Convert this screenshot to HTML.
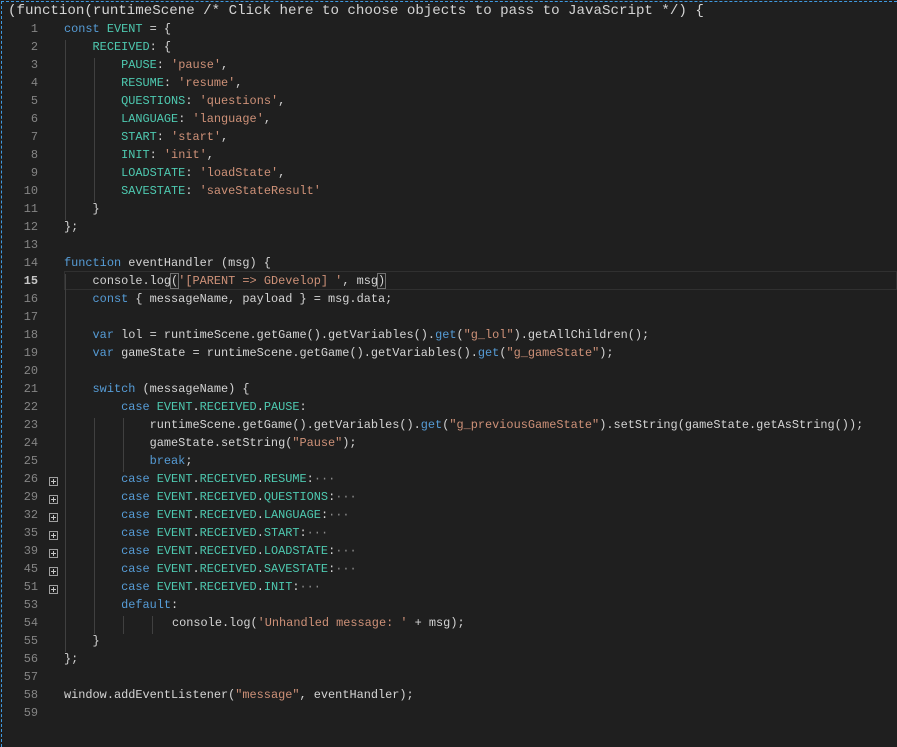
<!DOCTYPE html>
<html><head><meta charset="utf-8"><style>
html,body{margin:0;padding:0;background:#1f1f1f;}
body{width:897px;height:747px;position:relative;overflow:hidden;}
.frame{position:absolute;left:1px;top:1px;right:0;bottom:0;border-left:1px dashed #3f9ae0;border-top:1px dashed #3f9ae0;}
.hdr{position:absolute;left:8px;top:2px;font:14.15px "Liberation Mono",monospace;color:#d4d4d4;line-height:18px;white-space:pre;}
.row{position:absolute;left:0;height:18px;width:897px;line-height:18px;font:11.9px "Liberation Mono",monospace;white-space:pre;}
.ln{position:absolute;left:0;width:38px;text-align:right;color:#858585;}
.ln.a{color:#c6c6c6;font-weight:bold;}
.c{position:absolute;left:64px;color:#d4d4d4;}
.k{color:#569cd6}.t{color:#4ec9b0}.s{color:#ce9178}
.g{position:absolute;width:1px;background:#404040;}
.fold{position:absolute;left:49px;width:7px;height:7px;border:1px solid #a0a0a0;top:5px;}
.fold:before{content:"";position:absolute;left:1px;top:3px;width:5px;height:1px;background:#c5c5c5;}
.fold:after{content:"";position:absolute;left:3px;top:1px;width:1px;height:5px;background:#c5c5c5;}
.cur{position:absolute;left:64px;right:0;top:271px;height:17px;border:1px solid #303030;}
.br{outline:1px solid #707070;}
.dots{color:#8a8a8a}
</style></head><body>
<div class="frame"></div>
<div class="hdr">(function(runtimeScene /* Click here to choose objects to pass to JavaScript */) {</div>
<div class="cur"></div>
<div class="g" style="left:65px;top:40px;height:180px"></div>
<div class="g" style="left:94px;top:58px;height:144px"></div>
<div class="g" style="left:65px;top:274px;height:378px"></div>
<div class="g" style="left:94px;top:418px;height:216px"></div>
<div class="g" style="left:123px;top:418px;height:54px"></div>
<div class="g" style="left:123px;top:616px;height:18px"></div>
<div class="g" style="left:152px;top:616px;height:18px"></div>

<div class="row" style="top:22px"><span class="ln">1</span><span class="c"><span class="k">const</span> <span class="t">EVENT</span> = {</span></div>
<div class="row" style="top:40px"><span class="ln">2</span><span class="c">    <span class="t">RECEIVED</span>: {</span></div>
<div class="row" style="top:58px"><span class="ln">3</span><span class="c">        <span class="t">PAUSE</span>: <span class="s">'pause'</span>,</span></div>
<div class="row" style="top:76px"><span class="ln">4</span><span class="c">        <span class="t">RESUME</span>: <span class="s">'resume'</span>,</span></div>
<div class="row" style="top:94px"><span class="ln">5</span><span class="c">        <span class="t">QUESTIONS</span>: <span class="s">'questions'</span>,</span></div>
<div class="row" style="top:112px"><span class="ln">6</span><span class="c">        <span class="t">LANGUAGE</span>: <span class="s">'language'</span>,</span></div>
<div class="row" style="top:130px"><span class="ln">7</span><span class="c">        <span class="t">START</span>: <span class="s">'start'</span>,</span></div>
<div class="row" style="top:148px"><span class="ln">8</span><span class="c">        <span class="t">INIT</span>: <span class="s">'init'</span>,</span></div>
<div class="row" style="top:166px"><span class="ln">9</span><span class="c">        <span class="t">LOADSTATE</span>: <span class="s">'loadState'</span>,</span></div>
<div class="row" style="top:184px"><span class="ln">10</span><span class="c">        <span class="t">SAVESTATE</span>: <span class="s">'saveStateResult'</span></span></div>
<div class="row" style="top:202px"><span class="ln">11</span><span class="c">    }</span></div>
<div class="row" style="top:220px"><span class="ln">12</span><span class="c">};</span></div>
<div class="row" style="top:238px"><span class="ln">13</span></div>
<div class="row" style="top:256px"><span class="ln">14</span><span class="c"><span class="k">function</span> eventHandler (msg) {</span></div>
<div class="row" style="top:274px"><span class="ln a">15</span><span class="c">    console.log<span class="br">(</span><span class="s">'[PARENT =&gt; GDevelop] '</span>, msg<span class="br">)</span></span></div>
<div class="row" style="top:292px"><span class="ln">16</span><span class="c">    <span class="k">const</span> { messageName, payload } = msg.data;</span></div>
<div class="row" style="top:310px"><span class="ln">17</span></div>
<div class="row" style="top:328px"><span class="ln">18</span><span class="c">    <span class="k">var</span> lol = runtimeScene.getGame().getVariables().<span class="k">get</span>(<span class="s">"g_lol"</span>).getAllChildren();</span></div>
<div class="row" style="top:346px"><span class="ln">19</span><span class="c">    <span class="k">var</span> gameState = runtimeScene.getGame().getVariables().<span class="k">get</span>(<span class="s">"g_gameState"</span>);</span></div>
<div class="row" style="top:364px"><span class="ln">20</span></div>
<div class="row" style="top:382px"><span class="ln">21</span><span class="c">    <span class="k">switch</span> (messageName) {</span></div>
<div class="row" style="top:400px"><span class="ln">22</span><span class="c">        <span class="k">case</span> <span class="t">EVENT</span>.<span class="t">RECEIVED</span>.<span class="t">PAUSE</span>:</span></div>
<div class="row" style="top:418px"><span class="ln">23</span><span class="c">            runtimeScene.getGame().getVariables().<span class="k">get</span>(<span class="s">"g_previousGameState"</span>).setString(gameState.getAsString());</span></div>
<div class="row" style="top:436px"><span class="ln">24</span><span class="c">            gameState.setString(<span class="s">"Pause"</span>);</span></div>
<div class="row" style="top:454px"><span class="ln">25</span><span class="c">            <span class="k">break</span>;</span></div>
<div class="row" style="top:472px"><span class="ln">26</span><span class="fold"></span><span class="c">        <span class="k">case</span> <span class="t">EVENT</span>.<span class="t">RECEIVED</span>.<span class="t">RESUME</span>:<span class="dots">···</span></span></div>
<div class="row" style="top:490px"><span class="ln">29</span><span class="fold"></span><span class="c">        <span class="k">case</span> <span class="t">EVENT</span>.<span class="t">RECEIVED</span>.<span class="t">QUESTIONS</span>:<span class="dots">···</span></span></div>
<div class="row" style="top:508px"><span class="ln">32</span><span class="fold"></span><span class="c">        <span class="k">case</span> <span class="t">EVENT</span>.<span class="t">RECEIVED</span>.<span class="t">LANGUAGE</span>:<span class="dots">···</span></span></div>
<div class="row" style="top:526px"><span class="ln">35</span><span class="fold"></span><span class="c">        <span class="k">case</span> <span class="t">EVENT</span>.<span class="t">RECEIVED</span>.<span class="t">START</span>:<span class="dots">···</span></span></div>
<div class="row" style="top:544px"><span class="ln">39</span><span class="fold"></span><span class="c">        <span class="k">case</span> <span class="t">EVENT</span>.<span class="t">RECEIVED</span>.<span class="t">LOADSTATE</span>:<span class="dots">···</span></span></div>
<div class="row" style="top:562px"><span class="ln">45</span><span class="fold"></span><span class="c">        <span class="k">case</span> <span class="t">EVENT</span>.<span class="t">RECEIVED</span>.<span class="t">SAVESTATE</span>:<span class="dots">···</span></span></div>
<div class="row" style="top:580px"><span class="ln">51</span><span class="fold"></span><span class="c">        <span class="k">case</span> <span class="t">EVENT</span>.<span class="t">RECEIVED</span>.<span class="t">INIT</span>:<span class="dots">···</span></span></div>
<div class="row" style="top:598px"><span class="ln">53</span><span class="c">        <span class="k">default</span>:</span></div>
<div class="row" style="top:616px"><span class="ln">54</span><span class="c" style="left:172px">console.log(<span class="s">'Unhandled message: '</span> + msg);</span></div>
<div class="row" style="top:634px"><span class="ln">55</span><span class="c">    }</span></div>
<div class="row" style="top:652px"><span class="ln">56</span><span class="c">};</span></div>
<div class="row" style="top:670px"><span class="ln">57</span></div>
<div class="row" style="top:688px"><span class="ln">58</span><span class="c">window.addEventListener(<span class="s">"message"</span>, eventHandler);</span></div>
<div class="row" style="top:706px"><span class="ln">59</span></div>
</body></html>
